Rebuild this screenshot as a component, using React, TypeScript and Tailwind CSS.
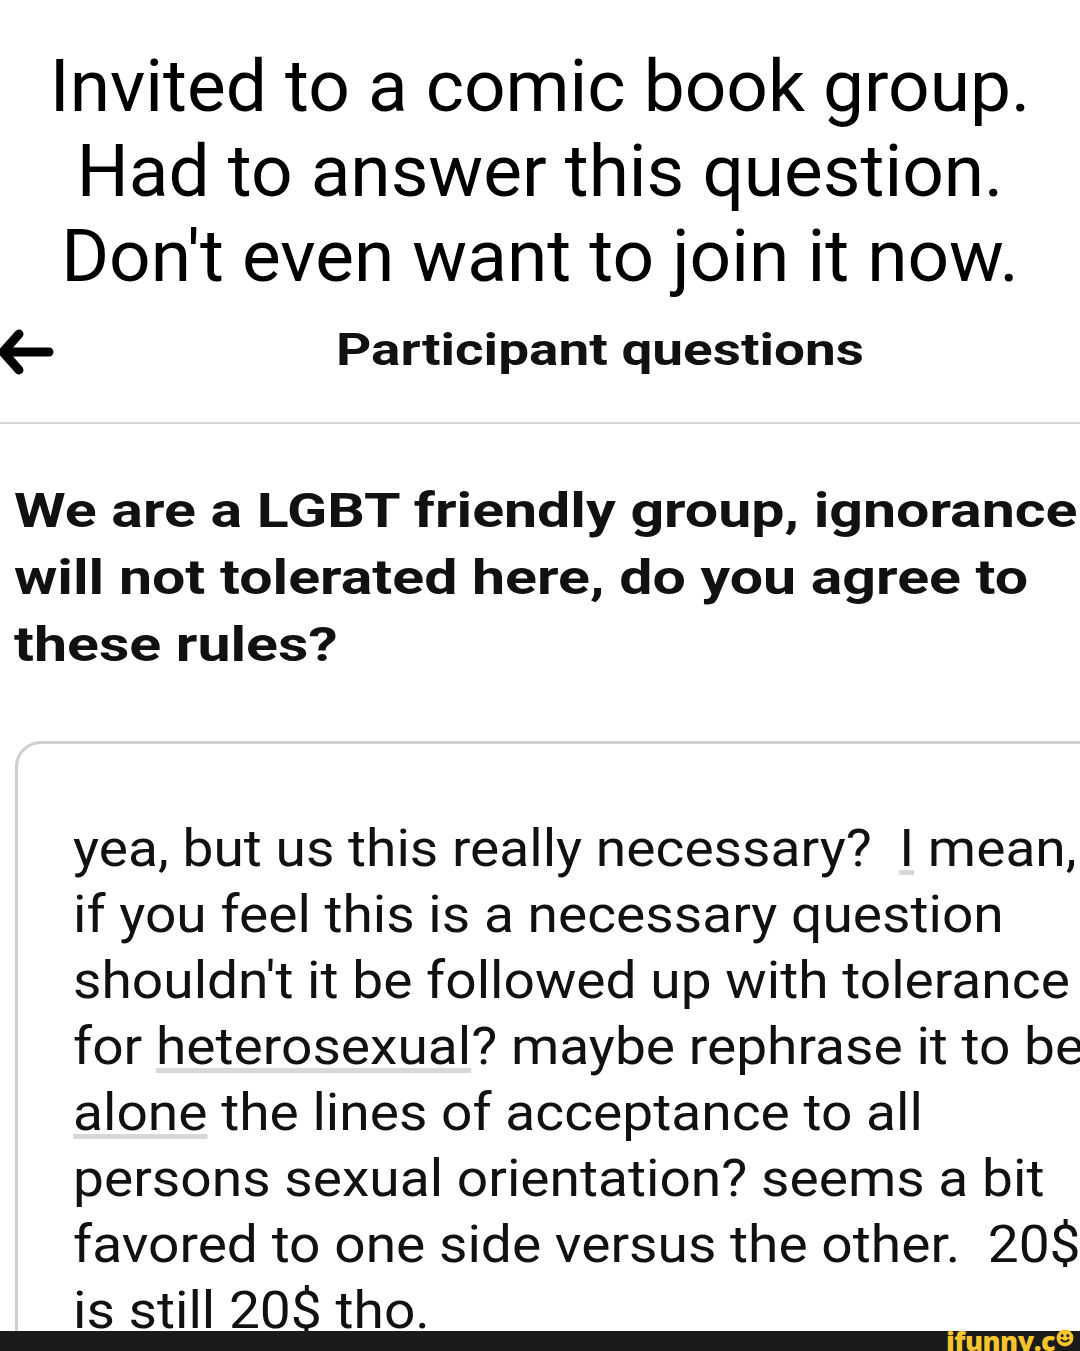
import React from "react";

const mark = "underline decoration-[#d8d8d8] decoration-[5px] underline-offset-[4px]";

const answerLines: React.ReactNode[] = [
  <>
    {"yea, but us this really necessary?  "}
    <span className={mark}>I</span> mean,
  </>,
  <>if you feel this is a necessary question</>,
  <>shouldn't it be followed up with tolerance</>,
  <>
    for <span className={mark}>heterosexual</span>? maybe rephrase it to be
  </>,
  <>
    <span className={mark}>alone</span> the lines of acceptance to all
  </>,
  <>persons sexual orientation? seems a bit</>,
  <>{"favored to one side versus the other.  20$"}</>,
  <>is still 20$ tho.</>,
];

function BackArrow() {
  return (
    <svg width="58" height="48" viewBox="0 0 58 48" fill="none">
      <path
        d="M22 6 L6 24 L22 42 M6 24 H52"
        stroke="#000"
        strokeWidth="9"
        strokeLinecap="round"
        strokeLinejoin="round"
      />
    </svg>
  );
}

export default function App() {
  return (
    <div
      className="relative w-[1080px] h-[1351px] overflow-hidden bg-white flex flex-col"
      style={{ fontFamily: "Roboto, sans-serif" }}
    >
      {/* caption */}
      <div className="shrink-0 pt-[44px] text-center text-[73px] leading-[85px] text-black">
        <div>Invited to a comic book group.</div>
        <div>Had to answer this question.</div>
        <div>Don't even want to join it now.</div>
      </div>

      {/* header */}
      <div className="shrink-0 flex items-start h-[125px] pt-[28px] border-b-2 border-[#d6d6d6]">
        <div className="w-[336px] -ml-[3px] mt-[1px] shrink-0">
          <BackArrow />
        </div>
        <div className="ml-[3px] text-[45px] leading-[45px] font-bold text-[#111] whitespace-nowrap origin-left scale-x-[1.22]">
          Participant questions
        </div>
      </div>

      {/* question */}
      <div className="shrink-0 pl-[14px] pt-[53px] text-[48px] leading-[67px] font-bold text-[#111] whitespace-nowrap">
        <div className="origin-left scale-x-[1.23]">
          <div>We are a LGBT friendly group, ignorance</div>
          <div>will not tolerated here, do you agree to</div>
          <div>these rules?</div>
        </div>
      </div>

      {/* answer box */}
      <div className="mt-[63px] ml-[15px] w-[1200px] h-[800px] shrink-0 border-[3px] border-[#cfcfcf] rounded-[26px]">
        <div className="pl-[55px] pt-[72px] text-[52px] leading-[66px] text-[#111] whitespace-pre">
          <div className="origin-left scale-x-[1.06]">
            {answerLines.map((l, i) => (
              <div key={i}>{l}</div>
            ))}
          </div>
        </div>
      </div>

      {/* watermark bar */}
      <div className="absolute left-0 bottom-0 w-full h-[20px] bg-[#1b1b1b]">
        <div className="absolute right-[6px] bottom-0 flex items-end">
          <span
            className="text-[27px] leading-[21px] font-black text-[#f6c52b] tracking-[-0.5px]"
            style={{ fontFamily: '"Open Sans", sans-serif' }}
          >
            ifunny.c
          </span>
          <svg width="18" height="18" viewBox="0 0 16 16" className="mb-[4px] ml-[1px]">
            <circle cx="8" cy="8" r="7.5" fill="#f6c52b" />
            <circle cx="5.5" cy="6" r="1.3" fill="#1b1b1b" />
            <circle cx="10.5" cy="6" r="1.3" fill="#1b1b1b" />
            <path d="M4.2 9.3 Q8 13.3 11.8 9.3" stroke="#1b1b1b" strokeWidth="1.6" fill="none" />
          </svg>
        </div>
      </div>
    </div>
  );
}
